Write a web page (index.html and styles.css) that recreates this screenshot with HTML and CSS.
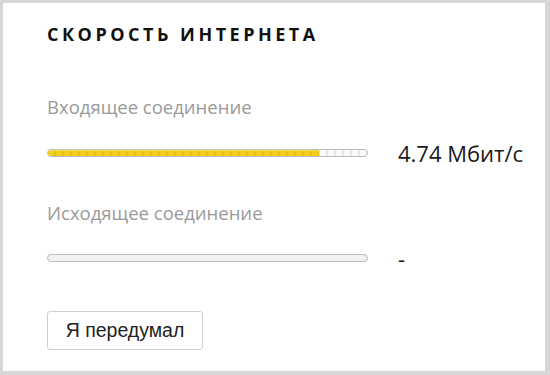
FILE: index.html
```html
<!DOCTYPE html>
<html lang="ru">
<head>
<meta charset="utf-8">
<link rel="stylesheet" href="styles.css">
</head>
<body>
<div class="frame">
  <div class="card">
    <h1 class="title">СКОРОСТЬ ИНТЕРНЕТА</h1>
    <div class="section first">
      <div class="label">Входящее соединение</div>
      <div class="row">
        <div class="bar"><div class="fill" style="width:85%"></div></div>
        <div class="value">4.74 Мбит/с</div>
      </div>
    </div>
    <div class="section second">
      <div class="label">Исходящее соединение</div>
      <div class="row">
        <div class="bar empty"></div>
        <div class="value dash">-</div>
      </div>
    </div>
    <button class="btn">Я передумал</button>
  </div>
</div>
</body>
</html>
```

FILE: styles.css
```css
html, body {
  margin: 0;
  padding: 0;
  background: #fff;
}
.frame {
  width: 550px;
  height: 375px;
  box-sizing: border-box;
  border: 3px solid #d6d6d6;
  border-right-width: 5px;
  border-bottom-width: 4px;
  background: #fff;
}
.card {
  padding: 19px 0 0 44px;
  font-family: "Open Sans", sans-serif;
}
.title {
  margin: 0;
  font-size: 18px;
  font-weight: 700;
  letter-spacing: 3.5px;
  color: #111;
  line-height: 24px;
}
.label {
  font-size: 18.5px;
  color: #9a9a9a;
  line-height: 22px;
}
.first .label {
  margin-top: 50px;
}
.second .label {
  margin-top: 34px;
}
.row {
  display: flex;
  align-items: center;
  height: 30px;
  margin-top: 20px;
}
.second .row {
  margin-top: 19px;
}
.bar {
  width: 319px;
  height: 6px;
  border: 1px solid #bdbdbd;
  border-radius: 4px;
  background: repeating-linear-gradient(90deg, #fafafa 0 6px, #e6e6e6 6px 8px);
  overflow: hidden;
}
.bar.empty {
  background: #f2f2f2;
}
.fill {
  height: 100%;
  background: repeating-linear-gradient(90deg, #f1cd1c 0 6px, #e7be10 6px 8px);
  box-shadow: inset 0 1px 0 #f8df5a;
}
.value {
  margin-left: 30px;
  font-size: 22px;
  color: #1a1a1a;
  line-height: 26px;
}
.btn {
  display: block;
  margin-top: 38px;
  width: 156px;
  height: 39px;
  background: #fff;
  border: 1px solid #cfcfcf;
  border-radius: 3px;
  font-family: "Liberation Sans", Arial, sans-serif;
  font-size: 19.5px;
  color: #222;
  padding: 0;
}
```
